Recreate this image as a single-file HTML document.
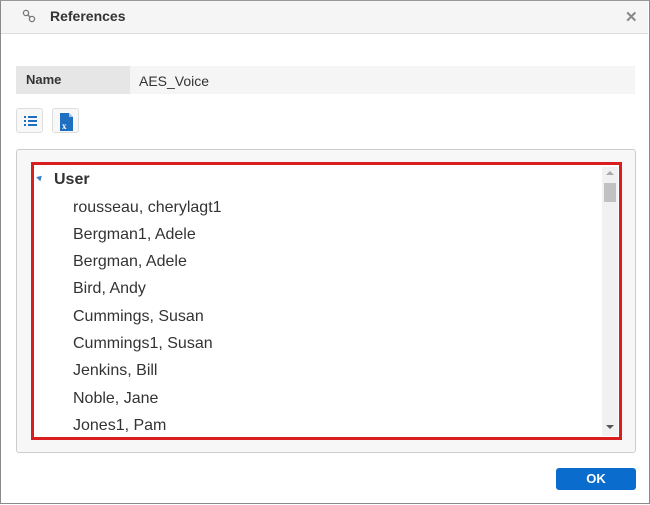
<!DOCTYPE html>
<html><head><meta charset="utf-8"><style>
*{margin:0;padding:0;box-sizing:border-box}
body{width:650px;height:505px;background:#fff;font-family:"Liberation Sans",Arial,sans-serif;position:relative;overflow:hidden}
.win{position:absolute;left:0;top:0;width:650px;height:504px;border:1px solid #8a8a8a;border-top-color:#999}
.hdr{position:absolute;left:1px;top:1px;width:647px;height:33px;background:#f5f5f5;border-bottom:1px solid #ddd}
.hdr .t{position:absolute;left:49px;top:7px;font-size:14px;font-weight:bold;color:#333}
.hdr .x{position:absolute;left:624px;top:7px;font-size:15px;font-weight:bold;color:#888}
.lbl{position:absolute;left:16px;top:66px;width:114px;height:28px;background:#e6e6e6;font-size:13px;font-weight:bold;color:#333;padding:6px 0 0 10px}
.val{position:absolute;left:130px;top:66px;width:505px;height:28px;background:#f5f5f5;font-size:14px;color:#333;padding:7px 0 0 9px}
.btn{position:absolute;top:108px;width:27px;height:25px;border:1px solid #ddd;border-radius:3px;background:#f8f8f8}
.panel{position:absolute;left:16px;top:149px;width:620px;height:304px;border:1px solid #ccc;border-radius:3px;background:#f7f7f7}
.red{position:absolute;left:31px;top:162px;width:591px;height:278px;border:3px solid #d81e1e;background:#fff}
.sb{position:absolute;left:602px;top:167px;width:16px;height:269px;background:#f1f1f1}
.thumb{position:absolute;left:604px;top:183px;width:12px;height:19px;background:#c1c1c1}
.it{position:absolute;left:73px;font-size:16px;color:#333}
.ok{position:absolute;left:556px;top:468px;width:80px;height:22px;background:#0a6ccc;border-radius:3px;color:#fff;font-weight:bold;font-size:13px;text-align:center;line-height:22px}
</style></head><body>
<div class="win"></div>
<div class="hdr">
<svg style="position:absolute;left:21px;top:8px" width="14" height="14" viewBox="0 0 14 14"><circle cx="4" cy="4" r="2.6" fill="none" stroke="#777" stroke-width="1.3"/><circle cx="10" cy="10" r="2.6" fill="none" stroke="#777" stroke-width="1.3"/><line x1="5.5" y1="5.5" x2="8.5" y2="8.5" stroke="#777" stroke-width="1.3"/></svg>
<div class="t">References</div><div class="x">✕</div></div>
<div class="lbl">Name</div><div class="val">AES_Voice</div>
<div class="btn" style="left:16px"><svg width="27" height="25" viewBox="0 0 27 25"><g fill="#1f6fc0"><rect x="7" y="7" width="2" height="2"/><rect x="11" y="7" width="9" height="2"/><rect x="7" y="11" width="2" height="2"/><rect x="11" y="11" width="9" height="2"/><rect x="7" y="15" width="2" height="2"/><rect x="11" y="15" width="9" height="2"/></g></svg></div>
<div class="btn" style="left:52px"><svg width="27" height="25" viewBox="0 0 27 25"><path d="M7 4h9l4 4v14H7z" fill="#1f6fc0"/><path d="M16 4v4h4" fill="#9cc3ea"/><text x="9" y="20" font-size="9" font-weight="bold" fill="#fff" font-family="Liberation Serif">x</text></svg></div>
<div class="panel"></div>
<div class="red"></div>
<div class="sb"></div><div class="thumb"></div>
<div style="position:absolute;left:606px;top:171px;width:0;height:0;border-left:4px solid transparent;border-right:4px solid transparent;border-bottom:4px solid #aaa"></div>
<div style="position:absolute;left:606px;top:425px;width:0;height:0;border-left:4px solid transparent;border-right:4px solid transparent;border-top:4px solid #555"></div>
<div style="position:absolute;left:37px;top:175px;width:0;height:0;border-left:3px solid transparent;border-right:3px solid transparent;border-bottom:5px solid #3a7cc8;transform:rotate(45deg)"></div>
<div class="it" style="left:54px;top:171px;font-weight:bold">User</div>
<div class="it" style="top:199px">rousseau, cherylagt1</div>
<div class="it" style="top:226px">Bergman1, Adele</div>
<div class="it" style="top:253px">Bergman, Adele</div>
<div class="it" style="top:280px">Bird, Andy</div>
<div class="it" style="top:308px">Cummings, Susan</div>
<div class="it" style="top:335px">Cummings1, Susan</div>
<div class="it" style="top:362px">Jenkins, Bill</div>
<div class="it" style="top:390px">Noble, Jane</div>
<div class="it" style="top:417px">Jones1, Pam</div>
<div class="ok">OK</div>
</body></html>
